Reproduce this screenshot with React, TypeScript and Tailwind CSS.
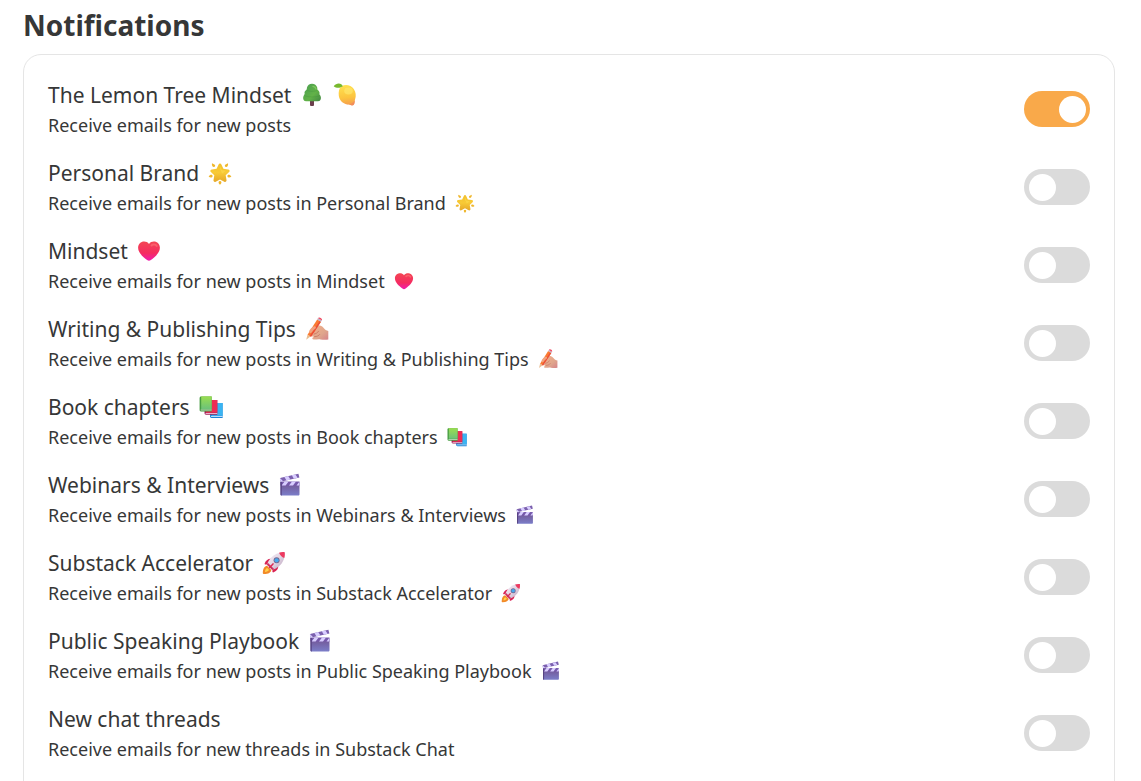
import React, { useState } from "react";

type IconName = "tree" | "lemon" | "star" | "heart" | "writing" | "books" | "clapper" | "rocket";

interface Setting {
  title: string;
  desc: string;
  icons: IconName[];
  // the description repeats the section's icon
  descIcon?: boolean;
  enabled: boolean;
}

const settings: Setting[] = [
  { title: "The Lemon Tree Mindset", desc: "Receive emails for new posts", icons: ["tree", "lemon"], enabled: true },
  { title: "Personal Brand", desc: "Receive emails for new posts in Personal Brand", icons: ["star"], descIcon: true, enabled: false },
  { title: "Mindset", desc: "Receive emails for new posts in Mindset", icons: ["heart"], descIcon: true, enabled: false },
  { title: "Writing & Publishing Tips", desc: "Receive emails for new posts in Writing & Publishing Tips", icons: ["writing"], descIcon: true, enabled: false },
  { title: "Book chapters", desc: "Receive emails for new posts in Book chapters", icons: ["books"], descIcon: true, enabled: false },
  { title: "Webinars & Interviews", desc: "Receive emails for new posts in Webinars & Interviews", icons: ["clapper"], descIcon: true, enabled: false },
  { title: "Substack Accelerator", desc: "Receive emails for new posts in Substack Accelerator", icons: ["rocket"], descIcon: true, enabled: false },
  { title: "Public Speaking Playbook", desc: "Receive emails for new posts in Public Speaking Playbook", icons: ["clapper"], descIcon: true, enabled: false },
  { title: "New chat threads", desc: "Receive emails for new threads in Substack Chat", icons: [], enabled: false },
];

const drawings: Record<IconName, React.ReactNode> = {
  tree: (
    <>
      <rect x="10" y="16.5" width="4" height="6.5" rx="1" fill="#6b3f4c" />
      <path d="M12 .8c2.600 0 4.600 1.700 5.200 3.700.3 1.200-.1 1.900.6 2.600 1.300 1 2 2.200 1.700 3.400-.2.9.1 1.200.8 2 1.300 2.400.6 5.700-2.200 5.700H6c-2.800 0-3.500-3.300-2.200-5.700.6-.9 1-1.300.8-2.200-.3-1.300.4-2.400 1.600-3.200.8-.5.5-1.400.8-2.500C7.600 2.500 9.400.8 12 .8z" fill="url(#tree-green)" />
      <path d="M7.500 7.600c3 1 6.500 1 9.300.1M5.200 12.900c4 1.400 9.800 1.500 13.900.1" stroke="#3c8a35" strokeWidth=".8" strokeLinecap="round" fill="none" opacity=".35" />
      <path d="M13 3.400c1.800.4 2.700 1.300 2.900 2.500" stroke="#8ed166" strokeWidth="1.400" strokeLinecap="round" fill="none" opacity=".7" />
    </>
  ),
  lemon: (
    <>
      <path d="M8.500 3.300C12.500.7 18 2 20.800 6c2.100 3 2.500 7 1.300 10.300-.5 1.500-.4 2.300-.8 4.100-.3 1.700-1.600 2.300-3 1.800-1.500-.5-2.400-.2-4.200-.7-4.400-1-7.800-4.200-8.300-8.700-.4-3.900.1-7.400 2.700-9.500z" fill="url(#lemon-yellow)" />
      <path d="M16.500 21.200c2.400-.6 4.300-2.100 5.300-4 .1 1.300-.1 2.600-.5 3.600-.5 1.400-1.700 1.900-3 1.400-.7-.3-1.200-.6-1.800-1z" fill="#f28a5d" opacity=".85" />
      <ellipse cx="15.500" cy="8" rx="4.300" ry="3.400" fill="#ffe86f" opacity=".65" />
      <path d="M.7 3.200C2.600.5 6-.2 8.300 1.200c.8.500 1.300 1.200 1.500 2.100C7.800 4.900 3.500 5.700.7 3.200z" fill="#78b92f" />
    </>
  ),
  star: (
    <>
      <path d="M12 2.500c.6 0 1.100.3 1.400 1l2 4.200 4.700.7c1.600.2 2 1.700 1 2.700l-3.400 3.200.8 4.700c.3 1.400-1 2.300-2.200 1.700L12 18.400l-4.300 2.300c-1.200.6-2.500-.3-2.200-1.700l.8-4.700-3.400-3.200c-1-1-.6-2.500 1-2.700l4.700-.7 2-4.200c.3-.7.8-1 1.400-1z" fill="url(#star-gold)" />
      <path d="M12 5l1.800 4 4.200.8-3.800 2.700L12 8z" fill="#ffe45c" opacity=".4" />
      <g fill="#efb62b">
        <path d="M4 2.200l2.800 1.500c.8.700.3 2.300-.9 2.300-1.600 0-2.300-2.200-1.900-3.800zM20 2.200l-2.800 1.500c-.8.700-.3 2.300.9 2.300 1.600 0 2.300-2.200 1.900-3.800z" />
        <path d="M.6 15.500c1.100-1.400 2.600-2 3.500-1.400 1.100.8.4 2.400-.9 2.500-1 .1-1.800-.4-2.600-1.100zM23.400 15.500c-1.100-1.400-2.600-2-3.500-1.400-1.100.8-.4 2.400.9 2.500 1 .1 1.800-.4 2.600-1.100z" />
        <path d="M12 23.800c-1.200-.9-1.700-2.200-1.300-3.100.4-1 2.200-1 2.600 0 .4.900-.1 2.200-1.300 3.100z" />
      </g>
    </>
  ),
  heart: (
    <>
      <path d="M12 5C13.200 3.300 15 2.600 16.800 2.600c3.500 0 6.100 2.600 6.100 6.200 0 4.900-4.700 9.100-9 12.200-1.400 1-2.400 1-3.800 0-4.300-3.100-9-7.300-9-12.200 0-3.600 2.600-6.200 6.100-6.200C9 2.600 10.800 3.300 12 5z" fill="url(#heart-red)" />
      <path d="M14.500 6.500c1.400-1.600 3.900-1.400 5.200.4" stroke="#ff8080" strokeWidth="2" strokeLinecap="round" fill="none" opacity=".5" />
    </>
  ),
  writing: (
    <>
      <path d="M10 10.500c1.800-1.700 3.800-2.400 5.700-1.700 2.300.8 3.500 3.300 5 4.200.8.500 1.700.7 2.600.9v8.600c-3 .5-5.500.3-7.800-.1-2-.4-4.300.2-6.700.2-1.600 0-2-1.700-.6-2.300l1.300-.6c-1.500.2-2.600-.3-2.500-1.200.1-1 1.300-1 2.100-1.700l-1.500-.5z" fill="url(#hand-skin)" />
      <path d="M9.500 19.700c2.500-.1 4.200-.9 5.200-2.200M8.700 17.100c2.200-.2 3.900-1.200 4.800-2.800" stroke="#c87864" strokeWidth=".9" strokeLinecap="round" fill="none" />
      <path d="M1.200 22.800l1.300-5 3 1.700z" fill="#e9bd91" />
      <path d="M2.500 17.800L12.200 2.400l3.800 2.300-9.900 15.100z" fill="#fa7a30" />
      <path d="M4.700 19.100L14.700 3.900l1.300.8-9.900 15.100z" fill="#ea4d3c" />
      <path d="M12.200 2.400l.8-1.300 3.800 2.300-.8 1.300z" fill="#c2b4c6" />
      <path d="M13 1.100c1-1.800 5 .4 3.800 2.300z" fill="#f0455d" />
      <path d="M4.200 14.700c0-1.700 2.600-4.500 4.500-5.300 1.600-.6 2.900.7 1.800 2.100-1.300 1.200-2.600 1.900-3.500 3.500-.8 1.400-2.800 1.200-2.800-.3z" fill="#f1a27f" />
    </>
  ),
  books: (
    <>
      <path d="M11 8h12.600v15H12.500c-1 0-1.500-.8-1.500-1.700z" fill="#1c83d6" />
      <path d="M12.500 8h11.100v12.800H12.500z" fill="#3ab4f2" />
      <path d="M12 21h11.600v1H12z" fill="#b9dcfa" />
      <path d="M5.500 5h12.800v14.800H7c-.9 0-1.500-.7-1.500-1.700z" fill="#a12358" />
      <path d="M7 5h11.300v12.700H7z" fill="#ed2b54" />
      <path d="M6.600 18h11.700v1H6.600z" fill="#e6b2cc" />
      <path d="M.6 3C.6 2 1.200 1.400 2 1.400h10.700v15H2C1 16.400.6 15.700.6 14.800z" fill="#479c42" />
      <path d="M2.200 1.400h10.500v12.700H2.200z" fill="url(#book-green)" />
      <path d="M1.700 14.500h11v1h-11z" fill="#c2dec2" />
    </>
  ),
  clapper: (
    <>
      <path d="M2.500 9h19v12.300c0 .8-.5 1.300-1.300 1.300H3.800c-.8 0-1.300-.5-1.300-1.300z" fill="url(#clapper-body)" />
      <path d="M2.500 8.500h19v4h-19z" fill="#7558aa" />
      <path d="M6.600 8.500h4l-3 4h-4zM14 8.500h4l-3 4h-4zM21.500 8.500v3.400l-.5.6h-2.500z" fill="#d8cdff" />
      <path d="M2 6.400c-.2-.8.200-1.400 1-1.600L20.400.7l1 3.700L2.500 8.800z" fill="#7b60ae" />
      <path d="M6.400 4l3.800-.9 2.200 3.400-3.900.9zM13.800 2.300l3.600-.9 2.200 3.400-3.700.9zM2.300 5.300l2.800 2.900-2.600.6-.5-2.400c-.1-.4 0-.8.3-1.100z" fill="#d8cdff" />
      <path d="M2.500 9h1.200v13.600c-.8 0-1.200-.5-1.200-1.300z" fill="#544080" />
    </>
  ),
  rocket: (
    <>
      <path d="M5 14.700c-2.400.3-4.100 2.800-4.200 7.400 0 .7.400 1.100 1.100 1 4.600-.2 7.100-1.800 7.400-4.200z" fill="#f28a28" />
      <path d="M5.200 17c-1.500.6-2.100 2.100-2.200 3.900 1.900-.1 3.400-.7 4-2.200z" fill="#ffd14b" />
      <path d="M9.500 7.800C6.500 7.400 4 9 2.700 12.300c-.3.900.2 1.400 1 1.300l3.500-.4zM16.200 14.500c.4 3-1.200 5.500-4.500 6.800-.9.300-1.400-.2-1.300-1l.4-3.500z" fill="#d92354" />
      <path d="M22.700 1.200c.6 5.400-1.700 10.300-5.500 13.800-2.100 1.900-4.500 3.200-7 4.100l-5.300-5.300c.9-2.500 2.200-4.900 4.100-7C12.500 3 17.300.7 22.700 1.200z" fill="url(#rocket-shell)" />
      <path d="M17 1.700c1.800-.6 3.800-.8 5.700-.5.300 2 .1 4-.5 5.800-2.300-1-4.100-2.800-5.200-5.300z" fill="#ed3a60" />
      <path d="M5.800 11.700l6.500 6.500-2.100.9-5.300-5.300z" fill="#ce3260" />
      <circle cx="14.600" cy="9.300" r="3" fill="#76678f" />
      <circle cx="14.600" cy="9.300" r="2.100" fill="#45a9ed" />
      <path d="M11 12.900l-3.400 3.500" stroke="#dc2953" strokeWidth="1.500" strokeLinecap="round" />
    </>
  ),
};

function IconGradients() {
  return (
    <svg className="absolute size-0" aria-hidden="true">
      <defs>
        <linearGradient id="tree-green" x1="0" y1="0" x2="1" y2="1">
          <stop stopColor="#4a9e51" />
          <stop offset=".6" stopColor="#62b248" />
          <stop offset="1" stopColor="#438943" />
        </linearGradient>
        <linearGradient id="lemon-yellow" x1=".6" y1="0" x2=".7" y2="1">
          <stop stopColor="#ffe04f" />
          <stop offset=".6" stopColor="#fcc43f" />
          <stop offset="1" stopColor="#f49a50" />
        </linearGradient>
        <linearGradient id="star-gold" x1="0" y1="0" x2="0" y2="1">
          <stop stopColor="#f2c02d" />
          <stop offset=".5" stopColor="#f8ca36" />
          <stop offset="1" stopColor="#e6a829" />
        </linearGradient>
        <linearGradient id="heart-red" x1="0" y1="0" x2="0" y2="1">
          <stop stopColor="#f34654" />
          <stop offset=".6" stopColor="#f52c60" />
          <stop offset="1" stopColor="#f01cae" />
        </linearGradient>
        <linearGradient id="hand-skin" x1="0" y1="0" x2="1" y2="1">
          <stop stopColor="#f4ae89" />
          <stop offset=".6" stopColor="#dfa68c" />
          <stop offset="1" stopColor="#d5838a" />
        </linearGradient>
        <linearGradient id="book-green" x1="0" y1="0" x2="0" y2="1">
          <stop stopColor="#9add4f" />
          <stop offset="1" stopColor="#6cc27a" />
        </linearGradient>
        <linearGradient id="clapper-body" x1="0" y1="0" x2="0" y2="1">
          <stop stopColor="#71528f" />
          <stop offset="1" stopColor="#7b7ec9" />
        </linearGradient>
        <linearGradient id="rocket-shell" x1="0" y1="0" x2="1" y2="1">
          <stop stopColor="#f5edf7" />
          <stop offset=".5" stopColor="#e3d6e4" />
          <stop offset="1" stopColor="#b59bb8" />
        </linearGradient>
      </defs>
    </svg>
  );
}

function Icon({ name, className }: { name: IconName; className: string }) {
  return (
    <svg viewBox="0 0 24 24" className={className} fill="none" aria-hidden="true">
      {drawings[name]}
    </svg>
  );
}

export default function NotificationSettings() {
  const [enabled, setEnabled] = useState(settings.map((s) => s.enabled));

  const toggle = (index: number) => {
    setEnabled((prev) => prev.map((value, i) => (i === index ? !value : value)));
  };

  return (
    <main className="h-screen overflow-hidden bg-white pt-1 pr-[26px] pl-[23px] font-['Noto_Sans',sans-serif] text-[#363737]">
      <IconGradients />
      <h2 className="mb-2 text-[28px] leading-[42px] font-bold">Notifications</h2>

      <div className="flex flex-col gap-4 rounded-[18px] border border-[#e5e5e5] px-6 pt-[23px] pb-12">
        {settings.map((setting, i) => (
          <div key={setting.title} className="flex items-center justify-between gap-6">
            <label htmlFor={`setting-${i}`} className="min-w-0 flex-1 pt-0.5">
              <span className="flex items-center gap-[9px] text-[21px] leading-[30px]">
                {setting.title}
                {setting.icons.map((name) => (
                  <Icon key={name} name={name} className="size-6 shrink-0" />
                ))}
              </span>
              <span className="flex items-center gap-[9px] text-[18px] leading-[30px]">
                {setting.desc}
                {setting.descIcon && <Icon name={setting.icons[0]} className="size-5 shrink-0" />}
              </span>
            </label>
            <input
              id={`setting-${i}`}
              type="checkbox"
              role="switch"
              checked={enabled[i]}
              onChange={() => toggle(i)}
              className="flex h-9 w-[66px] shrink-0 cursor-pointer appearance-none rounded-full bg-[#dbdbdb] p-[5px] transition-colors before:size-[27px] before:rounded-full before:bg-white before:transition-transform before:content-[''] checked:bg-[#f9a94a] checked:before:translate-x-[30px]"
            />
          </div>
        ))}
      </div>
    </main>
  );
}
